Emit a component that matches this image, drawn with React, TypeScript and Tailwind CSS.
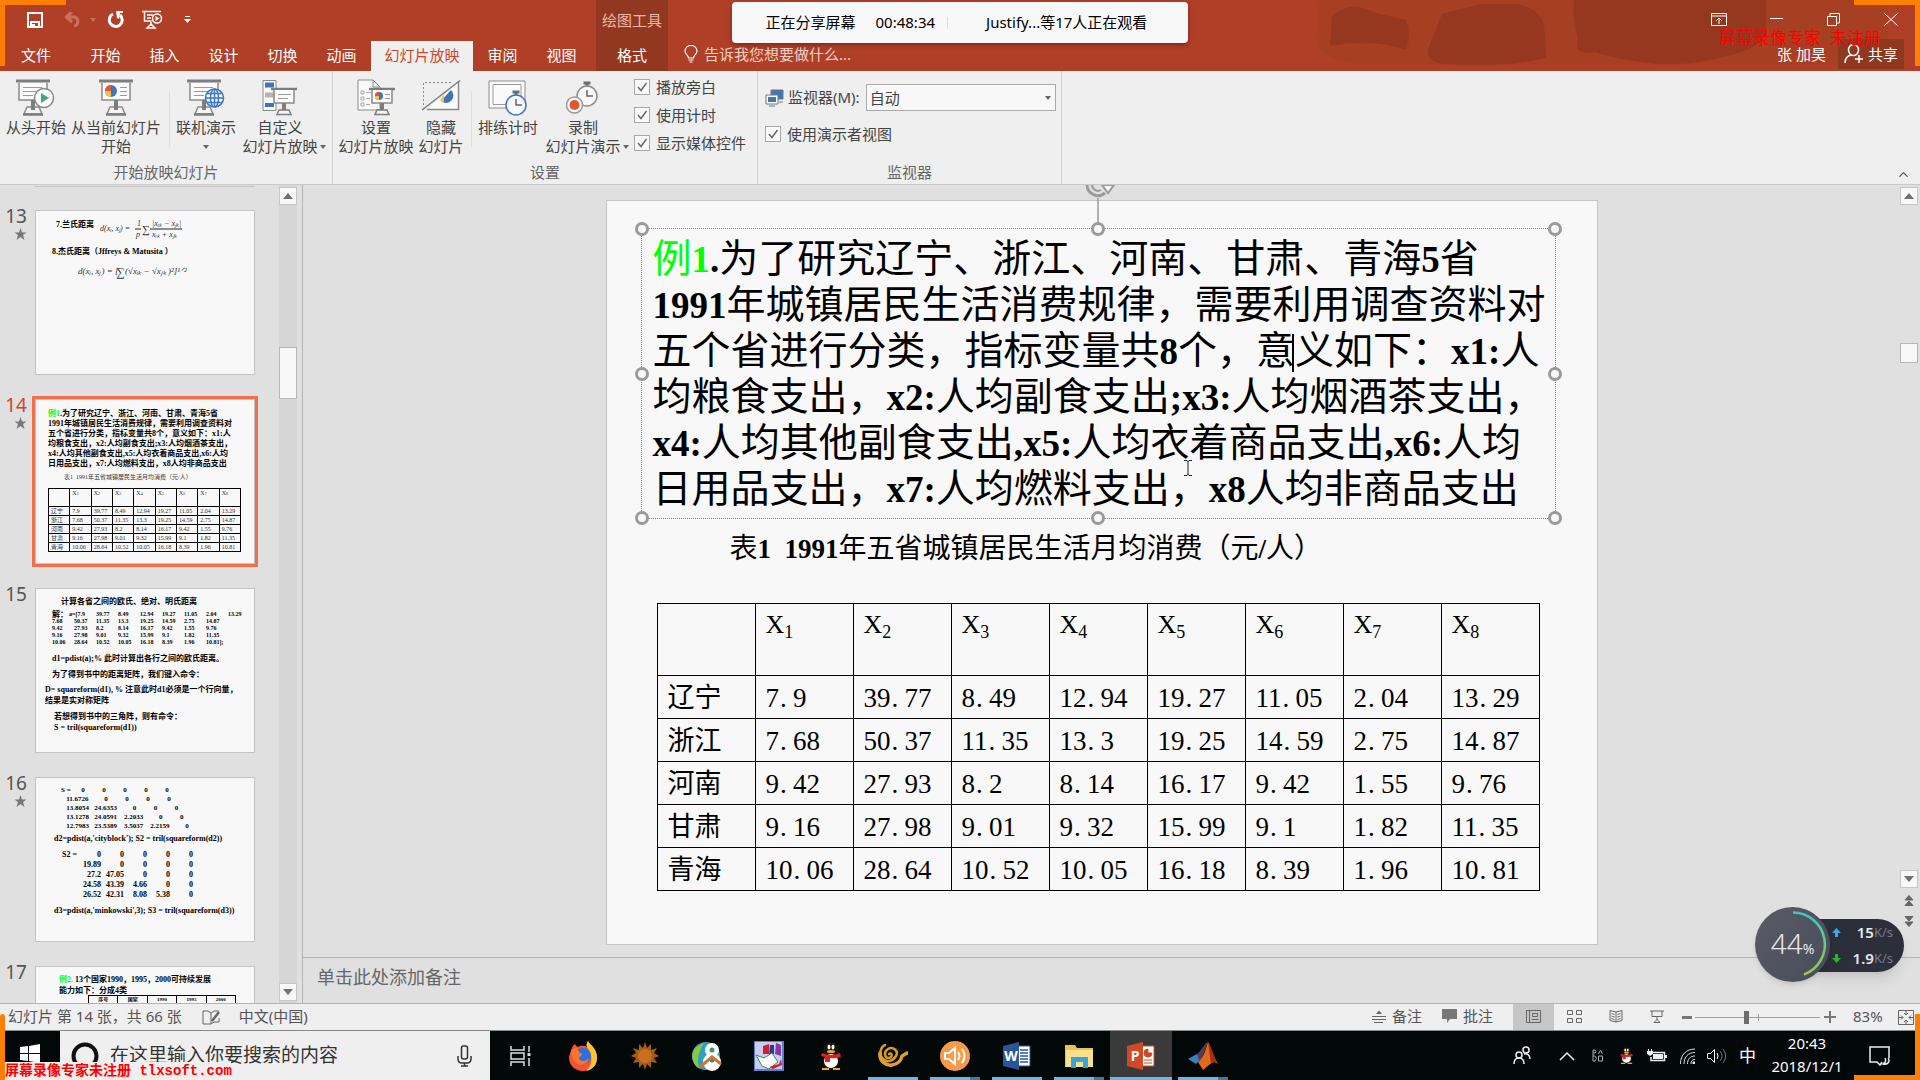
import React from 'react';
import { ChevronUp } from 'lucide-react';

const TABS = ['开始', '插入', '设计', '切换', '动画', '幻灯片放映', '审阅', '视图'];

const PROVINCES = [
  ['辽宁', '7.9', '39.77', '8.49', '12.94', '19.27', '11.05', '2.04', '13.29'],
  ['浙江', '7.68', '50.37', '11.35', '13.3', '19.25', '14.59', '2.75', '14.87'],
  ['河南', '9.42', '27.93', '8.2', '8.14', '16.17', '9.42', '1.55', '9.76'],
  ['甘肃', '9.16', '27.98', '9.01', '9.32', '15.99', '9.1', '1.82', '11.35'],
  ['青海', '10.06', '28.64', '10.52', '10.05', '16.18', '8.39', '1.96', '10.81']
];

const LINES = [
  '.为了研究辽宁、浙江、河南、甘肃、青海5省',
  '1991年城镇居民生活消费规律，需要利用调查资料对',
  '五个省进行分类，指标变量共8个，意|义如下：x1:人',
  '均粮食支出，x2:人均副食支出;x3:人均烟酒茶支出，',
  'x4:人均其他副食支出,x5:人均衣着商品支出,x6:人均',
  '日用品支出，x7:人均燃料支出，x8人均非商品支出'
];

const CAPTION = '表1  1991年五省城镇居民生活月均消费（元/人）';

const COLS = [1, 2, 3, 4, 5, 6, 7, 8];

/* ---------- ribbon icons ---------- */

function Screen({ x = 0, children }: { x?: number; children?: React.ReactNode }) {
  return (
    <g transform={`translate(${x} 0)`}>
      <path d="M0 2h34" stroke="#7d7d7d" strokeWidth="3" />
      <path d="M3 4v17h28V4" fill="#fbfbfb" stroke="#8a8a8a" strokeWidth="1.5" />
      {children}
      <path d="M17 21v10" stroke="#7d7d7d" strokeWidth="4" />
      <path d="M11 28h12l3 7H8z" fill="#f4f4f4" stroke="#8a8a8a" strokeWidth="1.5" />
      <path d="M7 35.500h20" stroke="#7d7d7d" strokeWidth="2.500" />
      <path d="M17 22v9" stroke="#7d7d7d" strokeWidth="4" />
    </g>
  );
}

const Pie = ({ cx, cy, r }: { cx: number; cy: number; r: number }) => (
  <g>
    <circle cx={cx} cy={cy} r={r} fill="#3f76b8" />
    <path d={`M${cx} ${cy}V${cy - r}A${r} ${r} 0 0 0 ${cx - r} ${cy}z`} fill="#e2572f" />
    <path d={`M${cx} ${cy}H${cx - r}A${r} ${r} 0 0 0 ${cx} ${cy + r}z`} fill="#f4c150" />
  </g>
);

const TextLines = () => <path d="M7 8.500h19M7 12.500h15M7 16.500h10" stroke="#9a9a9a" />;

const FromStartIcon = () => (
  <svg width="40" height="38" viewBox="0 0 40 38">
    <Screen><TextLines /></Screen>
    <circle cx="28" cy="19" r="9.500" fill="#fafafa" stroke="#8a8a8a" strokeWidth="1.500" />
    <path d="M25 14v10l8-5z" fill="#4aa283" />
  </svg>
);

const FromCurrentIcon = () => (
  <svg width="34" height="38" viewBox="0 0 34 38">
    <Screen>
      <Pie cx={12} cy={12} r={6} />
      <path d="M21 8.500h7M21 12.500h7M21 16.500h7" stroke="#9a9a9a" />
    </Screen>
  </svg>
);

const OnlineIcon = () => (
  <svg width="38" height="38" viewBox="0 0 38 38">
    <Screen><TextLines /></Screen>
    <g fill="#fafafa" stroke="#3f76c0" strokeWidth="1.500">
      <circle cx="27.500" cy="19" r="9" />
      <ellipse cx="27.500" cy="19" rx="4" ry="9" />
      <path d="M18.500 19h18M20 14.500h15M20 23.500h15M27.500 10v18" fill="none" />
    </g>
  </svg>
);

const CustomShowIcon = () => (
  <svg width="36" height="38" viewBox="0 0 36 38">
    <path d="M1 1.500h13v30H1z" fill="#fafafa" stroke="#8a8a8a" />
    <path d="M3 3.500h9v5H3zM3 24h9v4H3z" fill="#3f76b8" />
    <path d="M3 13.500h9v5H3z" fill="#b5b5b5" />
    <path d="M9 10h26" stroke="#7d7d7d" strokeWidth="2.500" />
    <path d="M12 11v13h20V11" fill="#fbfbfb" stroke="#8a8a8a" strokeWidth="1.500" />
    <path d="M16 15.500h13M16 19.500h10" stroke="#9a9a9a" />
    <path d="M22 24v8" stroke="#7d7d7d" strokeWidth="4" />
    <path d="M17 31h10l2 4.500H15z" fill="#f4f4f4" stroke="#7d7d7d" strokeWidth="1.500" />
  </svg>
);

const SetupIcon = () => (
  <svg width="38" height="38" viewBox="0 0 38 38">
    <path d="M1 1h15l7 7v23H1z" fill="#fafafa" stroke="#8a8a8a" />
    <path d="M16 1v7h7" fill="none" stroke="#8a8a8a" />
    <path d="M4 12h3v3H4zM4 18h3v3H4zM4 24h3v3H4z" fill="none" stroke="#aaa" />
    <path d="M9 13.500h5M9 19.500h4M9 25.500h4" stroke="#aaa" />
    <path d="M12 10h26" stroke="#7d7d7d" strokeWidth="2.500" />
    <path d="M15 11v13h20V11" fill="#fbfbfb" stroke="#8a8a8a" strokeWidth="1.500" />
    <Pie cx={22} cy={17} r={4} />
    <path d="M28 15.500h5M28 19.500h5" stroke="#9a9a9a" />
    <path d="M25 24v8" stroke="#7d7d7d" strokeWidth="4" />
    <path d="M20 31h10l2 4.500H18z" fill="#f4f4f4" stroke="#7d7d7d" strokeWidth="1.500" />
  </svg>
);

const HideIcon = () => (
  <svg width="40" height="38" viewBox="0 0 40 38">
    <path d="M2.500 26V3.500H32" fill="none" stroke="#8a8a8a" strokeDasharray="2 2" />
    <path d="M37.500 3v27.500H6" fill="#fafafa" stroke="#8a8a8a" strokeWidth="1.500" />
    <path d="M30 11a7 7 0 0 1-10 11z" fill="#3f76b8" />
    <path d="M23 15l-4 7 4 1z" fill="#f4c150" />
    <path d="M1 31L39 1.500" stroke="#7d7d7d" strokeWidth="1.500" />
  </svg>
);

const Watch = ({ cx, cy, color }: { cx: number; cy: number; color: string }) => (
  <g>
    <path d={`M${cx - 3.500} ${cy - 13}h7M${cx} ${cy - 13}v4`} stroke="#6d6d6d" strokeWidth="3" />
    <circle cx={cx} cy={cy} r="10" fill="#fafafa" stroke={color} strokeWidth="1.500" />
    <path d={`M${cx} ${cy - 6}v6h6`} fill="none" stroke="#666" strokeWidth="1.500" />
  </g>
);

const RehearseIcon = () => (
  <svg width="40" height="38" viewBox="0 0 40 38">
    <path d="M1 2h36v27H1z" fill="#fafafa" stroke="#8a8a8a" />
    <path d="M5 5.500h28v20H5z" fill="none" stroke="#9a9a9a" />
    <Watch cx={28} cy={26} color="#3f76c0" />
  </svg>
);

const RecordIcon = () => (
  <svg width="34" height="38" viewBox="0 0 34 38">
    <Watch cx={21} cy={17} color="#8a8a8a" />
    <circle cx="8.500" cy="26" r="8" fill="#fafafa" stroke="#9a9a9a" strokeWidth="1.500" />
    <circle cx="8.500" cy="26" r="5" fill="#e2572f" />
  </svg>
);

const Caret = () => (
  <svg width="6" height="4" viewBox="0 0 6 4" className="shrink-0">
    <path d="M0 0h6L3 4z" fill="#666" />
  </svg>
);

type BigButtonProps = {
  icon: React.ReactNode;
  top: string;
  bottom?: string;
  caret?: boolean;
  className: string;
};

function BigButton({ icon, top, bottom, caret, className }: BigButtonProps) {
  return (
    <button className={`flex flex-col items-center pt-2 leading-[19px] whitespace-nowrap ${className}`}>
      <span className="flex h-[39px] items-start">{icon}</span>
      <span>{top}</span>
      <span className="relative flex h-[19px] items-center">
        {bottom}
        {caret && !bottom && <Caret />}
        {caret && bottom && (
          <span className="absolute -right-[8px]">
            <Caret />
          </span>
        )}
      </span>
    </button>
  );
}

function Check({ id, label }: { id: string; label: string }) {
  return (
    <label htmlFor={id} className="flex h-7 items-center gap-[6px] whitespace-nowrap">
      <span className="relative h-4 w-4">
        <input
          id={id}
          type="checkbox"
          defaultChecked
          className="block h-4 w-4 appearance-none border border-[#a8a8a8] bg-[#fafafa]" />
        
        <svg className="pointer-events-none absolute inset-0" width="16" height="16" viewBox="0 0 16 16">
          <path d="M4 8l3 3.500L12.500 4" fill="none" stroke="#666" strokeWidth="1.500" />
        </svg>
      </span>
      {label}
    </label>
  );
}

function Group({ label, className, children }: { label: string; className: string; children: React.ReactNode }) {
  return (
    <section className={`flex shrink-0 flex-col border-r border-[#d2d2d2] ${className}`}>
      <div className="flex h-[90px]">{children}</div>
      <div className="text-center leading-[22px] text-[#666]">{label}</div>
    </section>
  );
}

const Divider = () => <div className="mt-5 h-[56px] w-px bg-[#e0e0e0]" />;

/* ---------- title bar ---------- */

function TitleBar() {
  return (
    <header className="relative flex h-[71px] shrink-0 bg-[#b03f28] text-white">
      <svg className="absolute right-[30px] top-0" width="590" height="66" viewBox="0 0 590 66" aria-hidden="true">
        <path d="M20 0h566q4 30 0 58l-60 6H60Q20 60 16 40z" fill="#a73f22" />
        <path d="M32 16Q50 0 72 12l34 8q6 16 0 30-34-12-76-4zM142 14l40-10h36q24 6 26 22t2 32q-40 10-104 6-20-4-12-20zM274 0h192v36q-12 14-32 18-40 12-76 10-40-4-62-12-24 4-18-14-6-20-4-38z" fill="#963720" />
      </svg>

      <div className="relative w-[596px] shrink-0">
        <div className="flex h-[39px] items-center pl-[27px]">
          <button aria-label="保存">
            <svg width="16" height="16" viewBox="0 0 16 16">
              <path d="M1 1h14v14H1zM4 15v-5h8v5" fill="none" stroke="#fff" strokeWidth="2" />
              <path d="M5 12h3v3H5z" fill="#fff" />
            </svg>
          </button>
          <button aria-label="撤消" className="ml-[22px] flex items-center gap-2 opacity-40">
            <svg width="17" height="15" viewBox="0 0 17 15">
              <path d="M7 0L1 5l6 5M2 5h8a5 5 0 0 1 0 9H9" fill="none" stroke="#f0b8a8" strokeWidth="3" />
            </svg>
            <svg width="6" height="4" viewBox="0 0 6 4"><path d="M0 0h6L3 4z" fill="#f0b8a8" /></svg>
          </button>
          <button aria-label="恢复" className="ml-[11px]">
            <svg width="18" height="18" viewBox="0 0 18 18">
              <path d="M6 3A6.500 6.500 0 1 0 13 4" fill="none" stroke="#fff" strokeWidth="3" />
              <path d="M9 0h7v2h-3l-1 6-2-1z" fill="#fff" />
            </svg>
          </button>
          <button aria-label="从头开始" className="ml-[17px]">
            <svg width="21" height="19" viewBox="0 0 21 19" fill="none" stroke="#fff" strokeWidth="1.500">
              <path d="M0 1.500h19M2.500 2v9h7M5 5h6M5 8h4M9 12v2M5 18l4-4 4 4z" />
              <circle cx="15" cy="8.500" r="4.500" />
              <path d="M13.500 6v5l4-2.500z" fill="#fff" stroke="none" />
            </svg>
          </button>
          <button aria-label="自定义快速访问工具栏" className="ml-[21px]">
            <svg width="7" height="7" viewBox="0 0 7 7" fill="#fff">
              <path d="M1 0h5v1H1zM0 3h7L3.500 7z" />
            </svg>
          </button>
        </div>
        <nav className="flex h-[32px] items-stretch pt-[2px] text-[15px] leading-[26px]">
          <button className="mr-1 w-[72px] pb-[2px]">文件</button>
          {TABS.map((t) =>
          <button
            key={t}
            className={t === '幻灯片放映' ? 'w-[102px] bg-[#efefef] pb-[2px] text-[#d2452a]' : 'w-[59px] pb-[2px]'}>
            
              {t}
            </button>
          )}
        </nav>
      </div>

      <div className="relative w-[72px] shrink-0 bg-[#923720] text-center text-[15px]">
        <div className="h-[41px] leading-[40px] text-[#ecb9a4]">绘图工具</div>
        <button className="h-[30px] w-full pb-[2px] leading-[26px]">格式</button>
      </div>

      <div className="relative flex min-w-0 flex-1 flex-col">
        <div className="flex h-[38px] items-center justify-end pr-[22px]">
          <button aria-label="功能区显示选项" className="mr-[43px]">
            <svg width="16" height="13" viewBox="0 0 16 13" fill="none" stroke="#fff">
              <path d="M.5.5h15v12H.5zM.5 3h15M8 11V5M5.500 7.500L8 5l2.500 2.500" />
            </svg>
          </button>
          <button aria-label="最小化" className="mr-[44px]">
            <svg width="13" height="12" viewBox="0 0 13 12"><path d="M0 5.500h13" stroke="#fff" /></svg>
          </button>
          <button aria-label="还原" className="mr-[44px]">
            <svg width="13" height="13" viewBox="0 0 13 13" fill="none" stroke="#fff">
              <path d="M.5 3.500h9v9h-9zM3 3V.500h9.500V10H10" />
            </svg>
          </button>
          <button aria-label="关闭">
            <svg width="14" height="13" viewBox="0 0 14 13"><path d="M.5.5l13 12M13.500.5l-13 12" stroke="#fff" /></svg>
          </button>
        </div>
        <div className="flex h-[33px] items-center pb-[1px] pl-[16px] pr-4 text-[15px] leading-[15px]">
          <svg width="14" height="18" viewBox="0 0 14 18" fill="none" stroke="#fff" strokeWidth="1.200">
            <path d="M4.500 13c0-3-3.500-3.500-3.500-7a6 5.500 0 0 1 12 0c0 3.500-3.500 4-3.500 7zM4.500 15h5M5.500 17h3" />
          </svg>
          <button className="ml-[6px] text-[#f3cfc4]">告诉我您想要做什么...</button>
          <span className="ml-auto">张 加昊</span>
          <button className="ml-3 flex h-[30px] items-center gap-1 bg-[#8f3820] px-[6px]">
            <svg width="20" height="20" viewBox="0 0 20 20" fill="none" stroke="#fff" strokeWidth="1.500">
              <ellipse cx="9.500" cy="6" rx="5" ry="5.500" />
              <path d="M1 19c0-5 2-7 6-8M15 11v8M11 15h8" />
            </svg>
            共享
          </button>
        </div>
        <div className="absolute right-[39px] top-[29px] text-[17px] leading-[17px] text-[#ff0000] whitespace-pre">
          屏幕录像专家  未注册
        </div>
      </div>

      <div className="absolute left-[38.100%] top-[2px] flex h-[41px] w-[456px] items-center rounded-sm bg-[#f8f8f8] pl-[34px] text-[15px] text-black shadow-[0_2px_5px_rgba(60,0,0,0.4)]">
        <span>正在分享屏幕</span>
        <span className="ml-5">00:48:34</span>
        <span className="ml-3 h-3 w-px bg-[#ddd]" />
        <span className="ml-[38px]">Justify...等17人正在观看</span>
      </div>
    </header>
  );
}

/* ---------- ribbon ---------- */

function Ribbon() {
  return (
    <div className="relative flex h-[114px] shrink-0 border-b border-[#c9c9c9] bg-[#efefef] text-[15px] text-[#444]">
      <Group label="开始放映幻灯片" className="w-[333px]">
        <BigButton icon={<FromStartIcon />} top="从头开始" className="w-[72px]" />
        <BigButton icon={<FromCurrentIcon />} top="从当前幻灯片" bottom="开始" className="w-[88px]" />
        <div className="w-[9px]" />
        <Divider />
        <BigButton icon={<OnlineIcon />} top="联机演示" caret className="w-[72px]" />
        <BigButton icon={<CustomShowIcon />} top="自定义" bottom="幻灯片放映" caret className="w-[76px]" />
      </Group>
      <Group label="设置" className="w-[425px]">
        <BigButton icon={<SetupIcon />} top="设置" bottom="幻灯片放映" className="w-[86px]" />
        <BigButton icon={<HideIcon />} top="隐藏" bottom="幻灯片" className="w-[44px]" />
        <div className="w-[8px]" />
        <Divider />
        <BigButton icon={<RehearseIcon />} top="排练计时" className="w-[72px]" />
        <BigButton icon={<RecordIcon />} top="录制" bottom="幻灯片演示" caret className="w-[78px]" />
        <div className="ml-[12px] pt-[2px]">
          <Check id="narration" label="播放旁白" />
          <Check id="timings" label="使用计时" />
          <Check id="media" label="显示媒体控件" />
        </div>
      </Group>
      <Group label="监视器" className="w-[304px]">
        <div className="pl-[7px] pt-[13px]">
          <div className="flex items-center">
            <svg width="19" height="18" viewBox="0 0 19 18">
              <path d="M6 1h12v9H6z" fill="#3f76b8" stroke="#777" />
              <path d="M1 6h12v9H1z" fill="#fafafa" stroke="#777" />
              <path d="M3 8h8v5H3z" fill="#3f76b8" />
              <path d="M4 17h6M14 13h4" stroke="#777" />
            </svg>
            <label htmlFor="monitor" className="ml-[4px] whitespace-nowrap">监视器(M):</label>
            <div className="relative ml-[6px]">
              <select
                id="monitor"
                className="h-[27px] w-[190px] appearance-none border border-[#ababab] bg-[#f8f8f8] pl-[3px] leading-[22px]">
                
                <option>自动</option>
              </select>
              <span className="pointer-events-none absolute right-[5px] top-0 flex h-full items-center"><Caret /></span>
            </div>
          </div>
          <div className="mt-[9px]">
            <Check id="presenter" label="使用演示者视图" />
          </div>
        </div>
      </Group>
      <button aria-label="折叠功能区" className="absolute bottom-[2px] right-[9px]">
        <ChevronUp size={15} className="text-[#555]" />
      </button>
    </div>
  );
}

/* ---------- slide ---------- */

function Mixed({ text, cjk, latin }: { text: string; cjk: string; latin: string }) {
  return (
    <>
      {text.split(/([\x20-\x7b\x7d\x7e]+)/).filter(Boolean).map((run, i) =>
      <span key={i} className={/^[\x20-\x7e]/.test(run) ? latin : cjk}>
          {run}
        </span>
      )}
    </>
  );
}

function BodyLine({ text }: { text: string }) {
  const [before, after] = text.split('|');
  const cjk = 'text-[39px]';
  const latin = 'text-[37px] font-bold';
  return (
    <>
      <Mixed text={before} cjk={cjk} latin={latin} />
      {after &&
      <>
          <span className="relative"><span className="absolute -top-[16px] -left-[3px] h-[38px] w-[2px] bg-black" /></span>
          <Mixed text={after} cjk={cjk} latin={latin} />
        </>
      }
    </>
  );
}

const HANDLES = [
  'left-0 top-0', 'left-1/2 top-0', 'left-full top-0',
  'left-0 top-1/2', 'left-full top-1/2',
  'left-0 top-full', 'left-1/2 top-full', 'left-full top-full'
];

function Value({ text }: { text: string }) {
  return (
    <>
      {text.split(/(\.)/).map((part, i) =>
      part === '.' ? <span key={i} className="inline-block w-[14px] pl-px">.</span> : part
      )}
    </>
  );
}

function Slide() {
  return (
    <div className="relative h-[745px] w-[992px] shrink-0 border border-[#c4c4c4] bg-[#f8f8f8] pt-[27px] font-['Liberation_Serif','Noto_Sans_CJK_SC',serif] text-black">
      <div className="relative ml-[34px] h-[291px] w-[915px] border border-dotted border-[#808080] pl-[11px] pt-[7px]">
        {LINES.map((line, i) =>
        <div key={line} className="h-[46px] leading-[46px] whitespace-nowrap">
            {i === 0 &&
          <span className="text-[#00ff00]">
                <BodyLine text="例1" />
              </span>
          }
            <BodyLine text={line} />
          </div>
        )}
        {HANDLES.map((h) =>
        <span
          key={h}
          className={`absolute h-[14px] w-[14px] -translate-x-1/2 -translate-y-1/2 rounded-full border-[3px] border-[#9a9a9a] bg-[#f8f8f8] ${h}`} />

        )}
        <svg className="absolute -top-[58px] left-1/2 -translate-x-1/2" width="40" height="52" viewBox="0 0 40 52" fill="none" stroke="#9a9a9a">
          <path d="M20 27v24" strokeWidth="1.500" />
          <path d="M9 14a11 11 0 0 0 18 8" strokeWidth="3" />
          <path d="M14 14a6 6 0 0 0 9 5" strokeWidth="2" />
          <path d="M24 14h12l-6 8z" fill="#f8f8f8" strokeWidth="2" />
        </svg>
        <svg className="absolute left-[542px] top-[231px]" width="8" height="16" viewBox="0 0 8 16">
          <path d="M0 .5h3l1 1 1-1h3M4 1v14M0 15.500h3l1-1 1 1h3" fill="none" stroke="#222" />
        </svg>
      </div>

      <div className="mb-[36px] mt-[12px] h-9 pl-[123px] leading-9 whitespace-pre">
        <Mixed text={CAPTION} cjk="text-[28px]" latin="text-[27px] font-bold" />
      </div>

      <table className="ml-[50px] w-[883px] table-fixed border-collapse text-left text-[27px]">
        <thead>
          <tr className="h-[72px]">
            <th className="border border-black" />
            {COLS.map((n) =>
            <th key={n} className="border border-black p-0 pl-[10px] align-top font-normal">
                <span className="text-[26px] leading-[40px]">X</span>
                <sub className="text-[18px]">{n}</sub>
              </th>
            )}
          </tr>
        </thead>
        <tbody>
          {PROVINCES.map((row) =>
          <tr key={row[0]} className="h-[43px] leading-[40px]">
              {row.map((v, i) =>
            <td key={i} className="border border-black p-0 pl-[10px] pt-[2px] whitespace-nowrap"><Value text={v} /></td>
            )}
            </tr>
          )}
        </tbody>
      </table>
    </div>
  );
}

/* ---------- thumbnails ---------- */

const Star = () => (
  <svg width="13" height="12" viewBox="0 0 24 24" fill="#777">
    <path d="M12 0l3 9h9l-7 5 3 10-8-6-8 6 3-10-7-5h9z" />
  </svg>
);

function Thumb13() {
  return (
    <div className="pl-4 pt-[7px] text-[8px]">
      <div className="flex items-start gap-[6px]">
        <b className="pl-1 leading-[14px]">7.兰氏距离</b>
        <svg width="84" height="22" viewBox="0 0 84 22" className="font-['Liberation_Serif'] text-[8px] italic" fill="#333">
          <text x="0" y="13">d(xᵢ, xⱼ) =</text>
          <path d="M35 11h6M50 11h32" stroke="#222" />
          <text x="37" y="8">1</text>
          <text x="36" y="19">p</text>
          <text x="42" y="15" fontSize="11">∑</text>
          <text x="52" y="8">|xᵢₖ − xⱼₖ|</text>
          <text x="52" y="19">xᵢₖ + xⱼₖ</text>
        </svg>
      </div>
      <b className="block pt-[5px] leading-[14px]">8.杰氏距离（Jffreys &amp; Matusita ）</b>
      <svg width="110" height="24" viewBox="0 0 110 24" className="ml-[26px] font-['Liberation_Serif'] text-[9px] italic" fill="#333">
        <text x="0" y="15">d(xᵢ, xⱼ) = [</text>
        <text x="38" y="17" fontSize="12">∑</text>
        <text x="47" y="15">(√xᵢₖ − √xⱼₖ )²]¹ᐟ²</text>
      </svg>
    </div>
  );
}

function Thumb14() {
  return (
    <div className="pl-[12px] pt-[9px]">
      {LINES.map((line, i) =>
      <div key={line} className="h-[10px] text-[8px] leading-[10px] font-bold whitespace-nowrap">
          {i === 0 && <span className="text-[#00ff00]">例1</span>}
          {line.replace('|', '')}
        </div>
      )}
      <div className="pl-[16px] pt-[2px] text-[6px] leading-[12px] text-[#333] whitespace-pre">{CAPTION}</div>
      <table className="mt-[5px] w-[193px] table-fixed border-collapse text-left text-[6px] leading-[8px] text-[#333]">
        <tbody>
          <tr className="h-[18px] align-top">
            <td className="border border-black" />
            {COLS.map((n) =>
            <td key={n} className="border border-black pl-[2px]">X<span className="text-[4px]">{n}</span></td>
            )}
          </tr>
          {PROVINCES.map((row) =>
          <tr key={row[0]}>
              {row.map((v, i) => <td key={i} className="border border-black p-0 pl-[2px]">{v}</td>)}
            </tr>
          )}
        </tbody>
      </table>
    </div>
  );
}

function Thumb15() {
  return (
    <div className="pl-[9px] pt-[7px] text-[8px] leading-[11px] font-bold whitespace-nowrap">
      <div className="pl-[16px]">计算各省之间的欧氏、绝对、明氏距离</div>
      <div className="mt-[4px] pl-[7px] text-[6px] leading-[7px]">
        {PROVINCES.map((row, r) =>
        <div key={row[0]} className="flex">
            {r === 0 && <span className="w-[17px] text-[8px]">解：</span>}
            {row.slice(1).map((v, i) =>
          <span key={i} className={r === 0 && i === 0 ? 'w-[27px]' : 'w-[22px]'}>{r === 0 && i === 0 ? 'a=[' : ''}{v}{r === 4 && i === 7 ? '];' : ''}</span>
          )}
          </div>
        )}
      </div>
      <div className="mt-[5px] pl-[7px] leading-[16px]">
        <div>d1=pdist(a);% 此时计算出各行之间的欧氏距离。</div>
        <div>为了得到书中的距离矩阵，我们键入命令：</div>
      </div>
      <div className="mt-[1px]">D= squareform(d1), % 注意此时d1必须是一个行向量，</div>
      <div>结果是实对称矩阵</div>
      <div className="mt-[5px] pl-[9px]">若想得到书中的三角阵，则有命令：</div>
      <div className="pl-[9px]">S = tril(squareform(d1))</div>
    </div>
  );
}

const S1 = [
  'S =      0          0          0          0          0',
  '   11.6726         0          0          0          0',
  '   13.8054   24.6353         0          0          0',
  '   13.1278   24.0591    2.2033         0          0',
  '   12.7983   23.5389    3.5037    2.2159         0'
];

const S2 = [
  ['0', '0', '0', '0', '0'],
  ['19.89', '0', '0', '0', '0'],
  ['27.2', '47.05', '0', '0', '0'],
  ['24.58', '43.39', '4.66', '0', '0'],
  ['26.52', '42.31', '8.08', '5.38', '0']
];

function Thumb16() {
  return (
    <div className="pl-[18px] pt-[8px] text-[8px] font-bold whitespace-pre">
      <div className="pl-[7px] text-[7px] leading-[9px]">
        {S1.map((l) => <div key={l}>{l}</div>)}
      </div>
      <div className="mt-[2px] leading-[12px]">d2=pdist(a,'cityblock'); S2 = tril(squareform(d2))</div>
      <div className="relative mt-[5px] w-[140px] leading-[10px]">
        <span className="absolute left-[8px]">S2 =</span>
        {S2.map((row, i) =>
        <div key={i} className="flex">
            {row.map((v, j) => <span key={j} className={j === 0 ? 'w-[47px] text-right' : 'w-[23px] text-right'}>{v}</span>)}
          </div>
        )}
      </div>
      <div className="mt-[5px] leading-[12px]">d3=pdist(a,'minkowski',3); S3 = tril(squareform(d3))</div>
    </div>
  );
}

function Thumb17() {
  return (
    <div className="pl-[23px] pt-[7px] text-[8px] leading-[11px] font-bold whitespace-nowrap">
      <div><span className="text-[#00ff00]">例2.</span> 13个国家1990，1995，2000可持续发展</div>
      <div>能力如下：分成4类</div>
      <table className="-mt-px ml-[29px] w-[148px] border-collapse text-center text-[5px] leading-[8px]">
        <tbody>
          <tr>
            {['序号', '国家', '1990', '1995', '2000'].map((c) =>
            <td key={c} className="border border-black p-0">{c}</td>
            )}
          </tr>
        </tbody>
      </table>
    </div>
  );
}

const THUMBS = [
  { n: 13, star: true, body: <Thumb13 /> },
  { n: 14, star: true, body: <Thumb14 /> },
  { n: 15, star: false, body: <Thumb15 /> },
  { n: 16, star: true, body: <Thumb16 /> },
  { n: 17, star: false, body: <Thumb17 /> }
];

function ScrollButton({ down, label }: { down?: boolean; label: string }) {
  return (
    <button aria-label={label} className="flex h-[18px] w-[18px] items-center justify-center border border-[#c6c6c6] bg-[#f8f8f8]">
      <svg width="10" height="6" viewBox="0 0 10 6" fill="#707070">
        <path d={down ? 'M0 0h10L5 6z' : 'M0 6h10L5 0z'} />
      </svg>
    </button>
  );
}

function ThumbPanel() {
  return (
    <aside className="flex w-[303px] shrink-0 border-r border-[#b4b4b4]">
      <div className="min-h-0 w-[279px] overflow-hidden">
        <div className="ml-[35px] mr-6 mt-px border-t border-[#c4c4c4]" />
        <div className="flex flex-col gap-6 pt-[23px]">
          {THUMBS.map(({ n, star, body }) => {
            const active = n === 14;
            return (
              <div key={n} className="flex h-[165px] shrink-0">
                <div className={`flex w-[35px] flex-col items-end pr-2 text-[19px] leading-[12px] ${active ? 'text-[#d2452a]' : 'text-[#555]'}`}>
                  {n}
                  {star && <div className="mt-[6px]"><Star /></div>}
                </div>
                <div
                  className={`h-[165px] w-[220px] overflow-hidden border border-[#c4c4c4] bg-[#f8f8f8] font-['Liberation_Serif','Noto_Sans_CJK_SC',serif] text-black ${
                  active ? 'outline-3 outline-[#f0704e]' : ''}`
                  }>
                  
                  {body}
                </div>
              </div>);

          })}
        </div>
      </div>
      <div className="flex w-[18px] flex-col bg-[#d6d6d6] pb-[2px] pt-[2px]">
        <ScrollButton label="向上滚动" />
        <div className="flex-1 pt-[142px]">
          <div className="h-[52px] border border-[#b8b8b8] bg-[#f8f8f8]" />
        </div>
        <ScrollButton down label="向下滚动" />
      </div>
    </aside>
  );
}

const DoubleArrow = ({ down }: { down?: boolean }) => (
  <svg width="10" height="11" viewBox="0 0 10 11" fill="#666" stroke="#666">
    <path d={down ? 'M1 .5h8L5 5zM1 6h8L5 10.500z' : 'M1 5h8L5 .500zM1 10.500h8L5 6z'} />
  </svg>
);

function Workspace() {
  return (
    <main className="flex min-h-0 flex-1 bg-[#e0e0e0]">
      <ThumbPanel />
      <div className="flex min-w-0 flex-1 flex-col">
        <div className="flex min-h-0 flex-1">
          <div className="flex min-w-0 flex-1 justify-center overflow-hidden pt-[15px]">
            <Slide />
          </div>
          <div className="mr-[2px] flex w-[18px] flex-col items-center pt-[2px]">
            <ScrollButton label="上一页" />
            <div className="w-full flex-1 pt-[138px]">
              <div className="h-[20px] border border-[#b8b8b8] bg-[#f8f8f8]" />
            </div>
            <ScrollButton down label="下一页" />
            <button aria-label="上一张幻灯片" className="mt-[7px] h-[11px]"><DoubleArrow /></button>
            <button aria-label="下一张幻灯片" className="mb-[30px] mt-[10px] h-[11px]"><DoubleArrow down /></button>
          </div>
        </div>
        <div className="h-[46px] border-t border-[#b4b4b4] pl-[14px] text-[18px] leading-[38px] text-[#666]">
          单击此处添加备注
        </div>
      </div>
    </main>
  );
}

/* ---------- status bar ---------- */

function StatusBar() {
  return (
    <footer className="flex h-[28px] shrink-0 items-center border-b border-t border-[#b4b4b4] border-b-[#8a8a8a] bg-[#efefef] pl-2 text-[15px] leading-[24px] text-[#555] whitespace-nowrap">
      <span className="pb-[2px]">幻灯片 第 14 张，共 66 张</span>
      <svg className="ml-[20px]" width="19" height="15" viewBox="0 0 19 15" fill="none" stroke="#666">
        <path d="M9 14H1V1h5l3 2v11l3-2h5V8M9 3l3-2h5" />
        <path d="M10 11l7-9" strokeWidth="2.500" />
      </svg>
      <span className="ml-[18px] pb-[2px]">中文(中国)</span>
      <button className="ml-auto flex items-center gap-[6px] pb-[2px]">
        <svg width="14" height="13" viewBox="0 0 14 13" stroke="#666">
          <path d="M0 6.500h14M0 9.500h14M2 12.500h9" />
          <path d="M4 4h6L7 .5z" fill="#666" stroke="none" />
        </svg>
        备注
      </button>
      <button className="ml-[20px] flex items-center gap-[6px] pb-[2px]">
        <svg width="15" height="14" viewBox="0 0 15 14"><path d="M0 0h15v10H8l-3 4v-4H0z" fill="#777" /></svg>
        批注
      </button>
      <button aria-label="普通视图" className="ml-[20px] flex h-full w-[41px] items-center justify-center bg-[#c6c6c6] pb-[2px]">
        <svg width="15" height="13" viewBox="0 0 15 13" fill="none" stroke="#666">
          <path d="M.5.5h14v12H.5zM3.500.5v12M6.500 3.500h5v3h-5zM5.500 9.500h7" />
        </svg>
      </button>
      <button aria-label="幻灯片浏览" className="flex w-[41px] justify-center pb-[2px]">
        <svg width="15" height="13" viewBox="0 0 15 13" fill="none" stroke="#666">
          <path d="M.5.5h5v4h-5zM9.500.5h5v4h-5zM.5 8.500h5v4h-5zM9.500 8.500h5v4h-5z" />
        </svg>
      </button>
      <button aria-label="阅读视图" className="flex w-[41px] justify-center pb-[2px]">
        <svg width="14" height="13" viewBox="0 0 14 13" fill="none" stroke="#666">
          <path d="M7 2L1 .5v10L7 12l6-1.500V.5L7 2v10M2.500 3.500l3 1M2.500 6l3 1M2.500 8.500l3 1M11.500 3.500l-3 1M11.500 6l-3 1M11.500 8.500l-3 1" />
        </svg>
      </button>
      <button aria-label="幻灯片放映" className="flex w-[41px] justify-center pb-[2px]">
        <svg width="14" height="13" viewBox="0 0 14 13" fill="none" stroke="#666">
          <path d="M0 1h14M2 1v5.500h10V1M7 7v3M4 12.500h6L7 9.500z" />
        </svg>
      </button>
      <button aria-label="缩小" className="ml-[5px] h-[3px] w-[10px] bg-[#777]" />
      <div className="relative ml-[3px] flex w-[125px] items-center">
        <input
          type="range"
          aria-label="显示比例"
          min={10}
          max={210}
          defaultValue={91}
          className="h-[13px] w-full appearance-none bg-[linear-gradient(#a0a0a0,#a0a0a0)] bg-[length:100%_1px] bg-center bg-no-repeat [&::-webkit-slider-thumb]:h-[13px] [&::-webkit-slider-thumb]:w-[5px] [&::-webkit-slider-thumb]:appearance-none [&::-webkit-slider-thumb]:bg-[#6e6e6e]" />
        
        <span className="absolute left-1/2 h-[7px] w-px bg-[#a0a0a0]" />
      </div>
      <button aria-label="放大" className="ml-[4px]">
        <svg width="12" height="12" viewBox="0 0 12 12"><path d="M0 6h12M6 0v12" stroke="#777" strokeWidth="2" /></svg>
      </button>
      <span className="ml-[17px] w-[31px] pb-[2px]">83%</span>
      <button aria-label="适应窗口" className="ml-[14px] mr-[6px]">
        <svg width="16" height="15" viewBox="0 0 16 15" fill="none" stroke="#666">
          <path d="M.5.5h15v14H.5zM8 1v4M8 10v4M1 7.500h4M11 7.500h4M6 3l2 2 2-2M6 12l2-2 2 2M3 5.500l2 2-2 2M13 5.500l-2 2 2 2" />
        </svg>
      </button>
    </footer>
  );
}

/* ---------- taskbar ---------- */

const Firefox = () => (
  <svg width="28" height="30" viewBox="0 0 28 30">
    <path d="M2 10C3 5 5 4 6 3c1 2 2 2 3 3 4-2 7-1 9 0-1-3 0-4 1-6 2 4 9 7 9 17 0 8-6 13-14 13S0 24 0 17c0-3 1-5 2-7z" fill="#f5503a" />
    <path d="M18 6c-1-3 0-4 1-6 2 4 9 7 9 17 0 7-5 12-11 13 6-5 8-15 1-24z" fill="#fdc62f" />
    <circle cx="14" cy="15" r="8" fill="#2b6fe0" />
    <path d="M2 10c1-2 3-3 6-3l3 5c2 0 3 1 1 3-3 1-2 5 2 5 3 0 4-2 6-2-2 6-11 8-15 2-2-4-3-7-3-10z" fill="#f8762a" />
  </svg>
);

const Sun = () => (
  <svg width="28" height="28" viewBox="0 0 28 28">
    <path d="M14 0l2 6 4-4v6l6-2-3 5 5 3-5 2 3 5-6-1v6l-4-4-2 6-2-6-4 4v-6l-6 1 3-5-5-2 5-3-3-5 6 2V2l4 4z" fill="#a85a18" />
    <circle cx="14" cy="14" r="7" fill="#c87020" />
  </svg>
);

const Globe = () => (
  <svg width="30" height="30" viewBox="0 0 30 30">
    <circle cx="14" cy="15" r="14" fill="#2f9fc4" />
    <path d="M4 6a14 14 0 0 0 4 22c-4-8-2-16 4-26z" fill="#8cc63f" />
    <circle cx="20" cy="9" r="7" fill="#fff" /><circle cx="20" cy="21" r="9" fill="#fff" />
    <circle cx="20" cy="9" r="2.500" fill="#3a9a60" /><circle cx="20" cy="19" r="2.500" fill="#2f7fc4" />
    <path d="M8 26l12-10 9 7" fill="none" stroke="#d0752a" strokeWidth="3" />
  </svg>
);

const Book = () => (
  <svg width="30" height="30" viewBox="0 0 30 30">
    <path d="M0 0h30v30H0z" fill="#5f7fd0" /><path d="M1 1h27v27H1z" fill="#c9cdf0" />
    <path d="M9 5l6-2 1 10H9z" fill="#d0202c" /><path d="M16 4h4v9h-4z" fill="#2a3a90" /><path d="M22 2l5 2v11l-6-2z" fill="#8a35a8" />
    <path d="M2 14l8 3 8-5 6 9-9 7-7-3z" fill="#fff" stroke="#3a8a5a" />
    <path d="M15 26l10-3 2-5 1 6-9 4z" fill="#d0202c" />
  </svg>
);

const Penguin = ({ w = 24, h = 28 }: { w?: number; h?: number }) => (
  <svg width={w} height={h} viewBox="0 0 24 28" preserveAspectRatio="none">
    <ellipse cx="12" cy="9" rx="7" ry="8" fill="#111" stroke="#333" strokeWidth=".5" />
    <ellipse cx="12" cy="19" rx="8" ry="8" fill="#fff" stroke="#111" strokeWidth="2" />
    <ellipse cx="10" cy="5" rx="1.500" ry="2.500" fill="#fff" /><ellipse cx="14" cy="5" rx="1.500" ry="2.500" fill="#fff" />
    <ellipse cx="12" cy="9.500" rx="4" ry="1.500" fill="#f5a623" />
    <path d="M3 11q9 4 18 0l1 4q-6 2-11 1v4H6v-5l-4-1z" fill="#e02020" />
    <path d="M3 27h7M14 27h7" stroke="#f5a623" strokeWidth="2" />
  </svg>
);

const Swirl = () => (
  <svg width="30" height="24" viewBox="0 0 30 24" fill="none" stroke="#e0a030" strokeWidth="3.500" strokeLinecap="round">
    <path d="M11 10c3-2 4 3 0 4s-6-6-1-9 11 2 8 7-9 7-13 3-3-12 2-14" stroke="#d89a28" strokeWidth="2.500" />
    <path d="M2 9c-1 8 6 13 12 12s9-4 10-9l5-3" />
  </svg>
);

const Speaker = () => (
  <svg width="30" height="30" viewBox="0 0 30 30">
    <circle cx="15" cy="15" r="15" fill="#f79a4a" />
    <path d="M5 12h4l6-5v16l-6-5H5zM18 11q3 4 0 8M22 8q5 7 0 14" fill="none" stroke="#fff" strokeWidth="2" />
  </svg>
);

const Office = ({ color, letter }: { color: string; letter: string }) => (
  <svg width="28" height="28" viewBox="0 0 28 28">
    <path d="M14 4h13v20H14z" fill="#fff" stroke={color} />
    {letter === 'W' ?
    <path d="M17 8h8M17 11h8M17 14h8M17 17h8M17 20h8" stroke={color} strokeWidth="1.500" /> :
    <path d="M21 7a4 4 0 1 0 4 4h-4zM17 18h8M17 21h8" fill={color} stroke={color} />
    }
    <path d="M0 4l16-4v28L0 24z" fill={color} />
    <text x="8" y="19" textAnchor="middle" fontSize="14" fontWeight="bold" fill="#fff">{letter}</text>
  </svg>
);

const Folder = () => (
  <svg width="28" height="24" viewBox="0 0 28 24">
    <path d="M0 1h10l2 3h16v19H0z" fill="#e8c35a" /><path d="M1 6h27v17H1z" fill="#fbe08a" />
    <path d="M6 24V13h17v11h-5v-6h-7v6z" fill="#35a5dc" />
  </svg>
);

const Matlab = () => (
  <svg width="30" height="28" viewBox="0 0 30 28">
    <path d="M0 17l9-5 5 4-6 6z" fill="#3a7fc0" />
    <path d="M9 12C13 9 16 2 20 0l-6 16-3 2z" fill="#5a3a50" />
    <path d="M20 0c4 7 6 16 10 22-4-3-6-2-9 1l-6 5-5-8c6-4 8-14 10-20z" fill="#e06a20" />
    <path d="M20 0c4 7 6 16 10 22-3-3-5-2-7 0-1-8-2-15-3-22z" fill="#b02818" />
  </svg>
);

const APPS = [
  { name: 'Firefox', icon: <Firefox /> },
  { name: 'Sun', icon: <Sun /> },
  { name: 'Browser', icon: <Globe /> },
  { name: 'Books', icon: <Book /> },
  { name: 'QQ', icon: <Penguin /> },
  { name: 'Capture', icon: <Swirl />, open: true },
  { name: 'Audio', icon: <Speaker />, open: true, stacked: true },
  { name: 'Word', icon: <Office color="#2a5699" letter="W" />, open: true },
  { name: 'Explorer', icon: <Folder />, open: true, stacked: true },
  { name: 'PowerPoint', icon: <Office color="#d24726" letter="P" />, open: true, active: true },
  { name: 'MATLAB', icon: <Matlab />, open: true, stacked: true }
];

function Taskbar() {
  return (
    <div className="relative flex h-[49px] shrink-0 bg-[#010807] text-white">
      <button aria-label="开始" className="flex w-[60px] justify-center pt-[13px]">
        <svg width="20" height="19" viewBox="0 0 20 19" fill="#fff">
          <path d="M0 3l8-1v7H0zM9 2l11-2v9H9zM0 10h8v7l-8-1zM9 10h11v9L9 17z" />
        </svg>
      </button>
      <div className="flex w-[430px] items-center bg-[#efefef] pl-[11px] pr-[18px]">
        <svg width="28" height="30" viewBox="0 0 28 30"><circle cx="14" cy="15" r="11.500" fill="none" stroke="#111" strokeWidth="4" /></svg>
        <input
          aria-label="搜索"
          placeholder="在这里输入你要搜索的内容"
          className="ml-[11px] min-w-0 flex-1 bg-transparent text-[19px] outline-none placeholder:text-[#333]" />
        
        <svg width="15" height="22" viewBox="0 0 15 22" fill="none" stroke="#333" strokeWidth="1.500">
          <rect x="4.500" y="1" width="6" height="13" rx="2" />
          <path d="M1 11v3q0 4 4 4h5q4 0 4-4v-3M7.500 18v3M4 21h7" />
        </svg>
      </div>
      <button aria-label="任务视图" className="flex w-[62px] items-center justify-center">
        <svg width="22" height="20" viewBox="0 0 22 20" fill="none" stroke="#ddd" strokeWidth="1.500">
          <path d="M1 0v4h13V0M1 7h13v6H1zM1 20v-4h13v4M19 0v6M19 12v8" />
          <path d="M17.500 7h3v3h-3z" fill="#ddd" stroke="none" />
        </svg>
      </button>
      {APPS.map((a) =>
      <button
        key={a.name}
        aria-label={a.name}
        className={`relative flex w-[62px] items-center justify-center ${a.active ? 'bg-[#3a3a3a]' : ''}`}>
        
          {a.icon}
          {a.open &&
        <span className={`absolute bottom-0 flex h-[3px] bg-[#6fb6e4] ${a.active ? 'inset-x-0' : 'inset-x-[6px]'}`}>
              {a.stacked && <span className="ml-auto w-[10px] bg-[#477898]" />}
            </span>
        }
        </button>
      )}

      <div className="ml-auto flex items-center">
        <svg className="mr-[28px]" width="18" height="19" viewBox="0 0 18 19" fill="none" stroke="#eee" strokeWidth="1.500">
          <circle cx="6" cy="9" r="3" /><path d="M1 18c0-4 2-6 5-6s5 2 5 6" />
          <circle cx="13" cy="4" r="3" /><path d="M11 8c3-1 6 1 6 5" />
        </svg>
        <svg className="mr-[17px]" width="16" height="10" viewBox="0 0 16 10"><path d="M1 9l7-7 7 7" fill="none" stroke="#eee" strokeWidth="1.500" /></svg>
        <svg className="mr-[15px]" width="12" height="13" viewBox="0 0 12 13" fill="none" stroke="#aaa">
          <path d="M1 1v11M1 1h2q2 2 0 3H1M1 7h2q3 2 0 5H1M8.500 1l-2 4M8.500 1l2 4M6.500 7h4v5h-4z" />
        </svg>
        <span className="mr-[13px]"><Penguin w={15} h={17} /></span>
        <svg className="mr-[13px]" width="20" height="14" viewBox="0 0 20 14">
          <path d="M5 3.500h12.500v8H4V8" fill="none" stroke="#eee" strokeWidth="1.500" /><path d="M6 5h10v5H6z" fill="#eee" />
          <path d="M18 6h2v3h-2zM0 2h6v3L3 7 0 5zM1 0h1v2H1zM4 0h1v2H4z" fill="#eee" />
        </svg>
        <svg className="mr-[12px]" width="15" height="16" viewBox="0 0 15 16" fill="none" stroke="#ddd">
          <path d="M.5 16C.5 7 6 1 15 1M4 16C4 9 8 4.500 15 4.500M7.500 16c0-5 3-8 7.500-8M11 16c0-3 1-4.500 4-4.500" />
          <path d="M13 14h2v2h-2z" fill="#fff" />
        </svg>
        <svg className="mr-[12px]" width="20" height="16" viewBox="0 0 20 16" fill="none" stroke="#eee">
          <path d="M.5 5.500h3l4-4v13l-4-4h-3z" /><path d="M10 5q2 3 0 6" />
          <path d="M13 3q4 5 0 10M16 1q5 7 0 14" stroke="#777" />
        </svg>
        <span className="w-[17px] text-[17px] leading-none">中</span>
        <div className="ml-[13px] w-[76px] pb-[2px] text-center text-[15px] leading-[23px]">
          <div>20:43</div>
          <div>2018/12/1</div>
        </div>
        <svg className="ml-[24px] mr-[30px]" width="21" height="20" viewBox="0 0 21 20" fill="none" stroke="#eee" strokeWidth="1.500">
          <path d="M20 12V1H1v15h7l3 3 2-3" />
          <path d="M16 12q2 4-2 6 5 1 6-3 0-2-1-3" />
        </svg>
      </div>
      <div className="absolute bottom-0 left-[5px] h-[18px] w-[226px] bg-[#efefef] font-['Liberation_Mono','Noto_Sans_CJK_SC',monospace] text-[14px] leading-[18px] font-bold text-[#ff0000] whitespace-nowrap">
        屏幕录像专家未注册 tlxsoft.com
      </div>
    </div>
  );
}

/* ---------- floating monitor ---------- */

function SpeedBall() {
  return (
    <div className="absolute bottom-[97px] right-[16px] flex h-[76px] w-[149px] items-center justify-end">
      <div className="flex h-[53px] w-[92px] flex-col justify-center rounded-r-full bg-[#2c2f3a] pl-[20px] text-[15px] leading-[26px] font-semibold text-[#e8e8e8] shadow-lg">
        <div className="flex items-center">
          <svg width="9" height="9" viewBox="0 0 9 9" fill="#3ca8e8"><path d="M4.500 0L9 5H6v4H3V5H0z" /></svg>
          <span className="ml-auto">15</span>
          <span className="mr-[11px] text-[13px] font-normal text-[#777a84]">K/s</span>
        </div>
        <div className="flex items-center">
          <svg width="9" height="9" viewBox="0 0 9 9" fill="#28b428"><path d="M4.500 9L9 4H6V0H3v4H0z" /></svg>
          <span className="ml-auto">1.9</span>
          <span className="mr-[11px] text-[13px] font-normal text-[#777a84]">K/s</span>
        </div>
      </div>
      <div className="absolute left-0 top-0 flex h-[75px] w-[75px] items-center justify-center rounded-full bg-linear-to-br from-[#5c5a66] to-[#444e5a] shadow-md">
        <svg className="absolute inset-0" width="75" height="75" viewBox="0 0 75 75">
          <defs>
            <linearGradient id="arc" x1="0" y1="0" x2="0" y2="1">
              <stop offset="0" stopColor="#3cc8c0" /><stop offset="1" stopColor="#a0c848" />
            </linearGradient>
          </defs>
          <path d="M38 5.500A32 32 0 0 1 49 67.500" fill="none" stroke="url(#arc)" strokeWidth="2.500" />
        </svg>
        <span className="relative pb-[3px] text-[28px] font-light text-[#e8e8e8]">
          44<span className="text-[14px] font-normal">%</span>
        </span>
      </div>
    </div>
  );
}

export default function App() {
  return (
    <div className="relative flex h-screen w-full flex-col overflow-hidden bg-[#e0e0e0] font-['Noto_Sans','Noto_Sans_CJK_SC',sans-serif]">
      <TitleBar />
      <Ribbon />
      <Workspace />
      <StatusBar />
      <Taskbar />
      <SpeedBall />

      {/* recording frame corners */}
      <div className="pointer-events-none absolute left-0 top-0 h-[66px] w-[66px] border-l-[5px] border-t-[5px] border-[#ff7f00]" />
      <div className="pointer-events-none absolute right-0 top-0 h-[66px] w-[66px] border-r-[5px] border-t-[5px] border-[#ff7f00]" />
      <div className="pointer-events-none absolute bottom-0 left-0 h-[66px] w-[5px] rounded-t bg-[#ff7f00]" />
      <div className="pointer-events-none absolute bottom-0 right-0 h-[66px] w-[66px] border-b-[5px] border-r-[5px] border-[#ff7f00]" />
    </div>
  );
}
